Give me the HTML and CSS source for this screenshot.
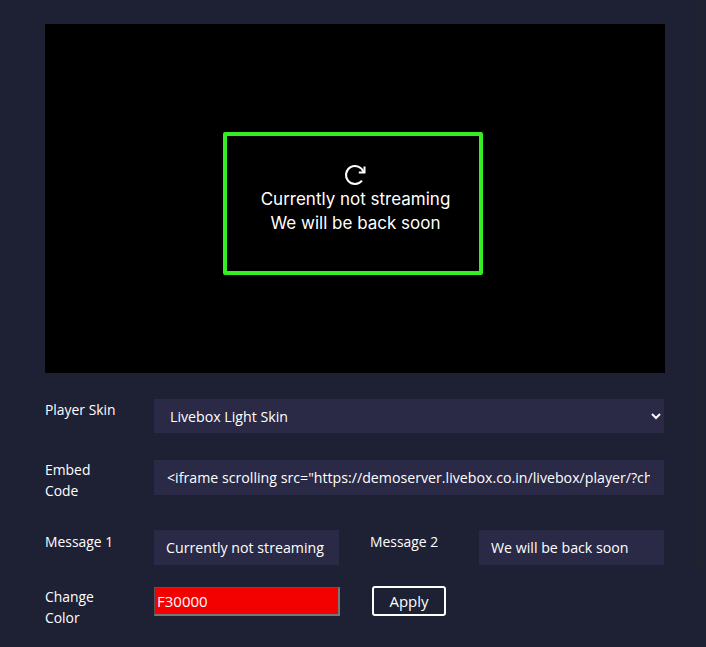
FILE: index.html
```html
<!DOCTYPE html>
<html lang="en">
<head>
<meta charset="UTF-8" />
<meta name="viewport" content="width=device-width, initial-scale=1" />
<title>Player Settings</title>
<link rel="stylesheet" href="styles.css">
</head>
<body>

  <div class="page">
    <div class="content">

      <div class="player">
        <div class="offline-box">
          <svg class="reload-icon" viewBox="0 0 22 22" width="22" height="22" fill="none" stroke="#fff" stroke-width="2">
            <path d="M18 16.7A9 9 0 1 1 19.5 8" />
            <path d="M20.5 2.5V8.6H14.8" />
          </svg>
          <p class="offline-text">Currently not streaming</p>
          <p class="offline-text">We will be back soon</p>
        </div>
      </div>

      <div class="form-row row-skin">
        <label class="field-label" for="skin">Player Skin</label>
        <select class="field field-select" id="skin">
          <option>Livebox Light Skin</option>
          <option>Livebox Dark Skin</option>
        </select>
      </div>

      <div class="form-row row-embed">
        <label class="field-label" for="embed">Embed Code</label>
        <input class="field field-embed" id="embed" type="text" value='&lt;iframe scrolling src="https://demoserver.livebox.co.in/livebox/player/?chnl=demo" width="640" height="360"&gt;&lt;/iframe&gt;'>
      </div>

      <div class="form-row row-message">
        <label class="field-label" for="msg1">Message 1</label>
        <input class="field field-message" id="msg1" type="text" value="Currently not streaming">
        <label class="field-label label-second" for="msg2">Message 2</label>
        <input class="field field-message" id="msg2" type="text" value="We will be back soon">
      </div>

      <div class="form-row row-color">
        <label class="field-label" for="color">Change Color</label>
        <input class="color-input" id="color" type="text" value="F30000">
        <button class="apply-btn" type="button">Apply</button>
      </div>

    </div>
    <div class="scroll-strip"></div>
  </div>

</body>
</html>
```

FILE: styles.css
```css
html, body {
  margin: 0;
  padding: 0;
  height: 100%;
  overflow: hidden;
  background: #1e2034;
  font-family: "Open Sans", "Noto Sans", Arial, sans-serif;
  color: #fff;
}

.page {
  display: flex;
  align-items: flex-start;
}

.content {
  width: 695px;
  flex: none;
  box-sizing: border-box;
  padding: 24px 31px 0 45px;
}

.scroll-strip {
  width: 10px;
  height: 569px;
  flex: none;
  background: #20232f;
}

.player {
  width: 620px;
  height: 349px;
  margin-bottom: 26px;
  background: #000;
  display: flex;
  align-items: center;
  justify-content: center;
}

.offline-box {
  width: 260px;
  height: 143px;
  margin: 10px 0 0 -4px;
  box-sizing: border-box;
  padding: 0 0 8px 5px;
  border: 4px solid #35ed24;
  border-radius: 2px;
  display: flex;
  flex-direction: column;
  align-items: center;
  justify-content: center;
}

.reload-icon {
  margin: 0 0 1px -2px;
}

.offline-text {
  margin: 0;
  font-family: Inter, "Open Sans", sans-serif;
  font-size: 17px;
  line-height: 24px;
  color: #fff;
}

.form-row {
  display: flex;
  align-items: flex-start;
}

.row-skin { margin-bottom: 27px; }
.row-embed { margin-bottom: 29px; }
.row-message { margin-bottom: 21px; }

.field-label {
  width: 109px;
  flex: none;
  font-size: 13.9px;
  line-height: 21px;
  color: #fff;
}

.row-embed .field-label {
  width: 60px;
  margin: -1px 49px 0 0;
}

.row-color .field-label {
  width: 60px;
  margin: 0 49px 0 0;
}

.row-message .field-label {
  padding-top: 1px;
}

.label-second {
  width: 109px;
  margin-left: 31px;
}

.field {
  box-sizing: border-box;
  border: none;
  border-radius: 0;
  outline: none;
  background: #2a2946;
  color: #fff;
  font-family: inherit;
  font-size: 14.2px;
}

.field-select {
  width: 510px;
  height: 34px;
  padding: 0 0 0 12px;
}

.field-embed {
  width: 510px;
  height: 35px;
  padding: 0 14px 0 13px;
}

.field-message {
  width: 185px;
  height: 35px;
  padding: 0 12px;
}

.color-input {
  width: 186px;
  height: 29px;
  box-sizing: border-box;
  padding: 0 0 0 2px;
  border-style: solid;
  border-color: #555 #777 #777 #555;
  border-width: 1px 2px 2px 1px;
  background: #f30000;
  color: #fff;
  font-family: inherit;
  font-size: 15px;
  outline: none;
  margin-top: 1px;
}

.apply-btn {
  width: 74px;
  height: 30px;
  margin-left: 32px;
  box-sizing: border-box;
  border: 2px solid #fff;
  border-radius: 3px;
  background: transparent;
  color: #fff;
  font-family: inherit;
  font-size: 15px;
  cursor: pointer;
}
```
